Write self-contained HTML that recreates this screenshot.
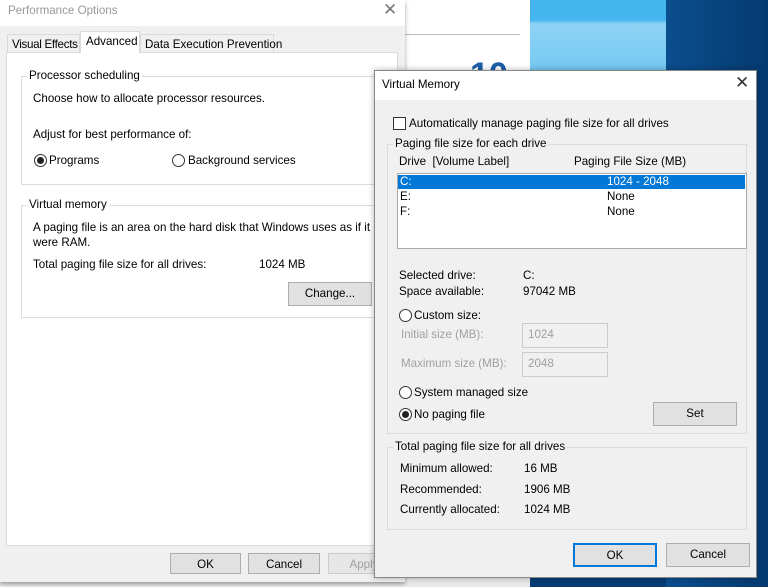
<!DOCTYPE html>
<html><head><style>
*{margin:0;padding:0;box-sizing:border-box}
body{width:768px;height:587px;position:relative;overflow:hidden;background:#063c73;font-family:"Liberation Sans",sans-serif;font-size:11.6px;color:#000}
.a{position:absolute;white-space:nowrap}
.btn{position:absolute;background:#e1e1e1;border:1px solid #adadad;text-align:center;line-height:21px}
.grp{position:absolute;border:1px solid #dcdcdc}
.lab{position:absolute;background:inherit;padding:0 2px}
.rad{position:absolute;width:13px;height:13px;border:1px solid #333;border-radius:50%;background:#fff}
.rad.on::after{content:"";position:absolute;left:2px;top:2px;width:7px;height:7px;border-radius:50%;background:#222}
.g{color:#a0a0a0}
</style></head><body>
<div class="a" style="left:0;top:560px;width:530px;height:27px;background:#e8e8e8"></div>
<div class="a" style="left:530px;top:0;width:136px;height:80px;background:linear-gradient(180deg,#45b5ee 0,#45b5ee 20px,#8ed3f5 24px,#6fc6f2 80px)"></div>
<div class="a" style="left:666px;top:0;width:102px;height:587px;background:linear-gradient(90deg,#0b4e8e,#053a70)"></div>
<div class="a" style="left:405px;top:0;width:125px;height:80px;background:#fff"></div>
<div class="a" style="left:405px;top:34px;width:115px;height:1px;background:#bbb"></div>
<div class="a" style="left:470px;top:56px;font-size:34px;color:#1e5fa8;font-weight:bold">10</div>

<div class="a" style="left:0;top:0;width:405px;height:582px;background:#f0f0f0;box-shadow:0 2px 4px rgba(0,0,0,.35)"></div>
<div class="a" style="left:0;top:0;width:405px;height:26px;background:#fff"></div>
<div class="a g" style="left:8px;top:4px;color:#999">Performance Options</div>
<div class="a" style="left:383px;top:0;font-size:17px;color:#777">✕</div>
<div class="a" style="left:6px;top:52px;width:392px;height:494px;background:#fff;border:1px solid #d9d9d9"></div>
<div class="a" style="left:7px;top:34px;width:73px;height:19px;border:1px solid #d9d9d9;background:#f0f0f0;padding:3px 0 0 4px;overflow:hidden;letter-spacing:-0.3px">Visual Effects</div>
<div class="a" style="left:80px;top:31px;width:60px;height:22px;border:1px solid #d9d9d9;border-bottom:none;background:#fff;padding:3px 0 0 5px">Advanced</div>
<div class="a" style="left:140px;top:34px;width:134px;height:19px;border:1px solid #d9d9d9;background:#f0f0f0;padding:3px 0 0 4px">Data Execution Prevention</div>
<div class="grp" style="left:21px;top:76px;width:390px;height:109px;background:#fff"><span class="lab" style="left:5px;top:-8px">Processor scheduling</span></div>
<div class="a" style="left:33px;top:92px">Choose how to allocate processor resources.</div>
<div class="a" style="left:33px;top:128px">Adjust for best performance of:</div>
<div class="rad on" style="left:34px;top:154px"></div><div class="a" style="left:49px;top:154px">Programs</div>
<div class="rad" style="left:172px;top:154px"></div><div class="a" style="left:188px;top:154px">Background services</div>
<div class="grp" style="left:21px;top:205px;width:390px;height:113px;background:#fff"><span class="lab" style="left:5px;top:-8px">Virtual memory</span></div>
<div class="a" style="left:33px;top:221px">A paging file is an area on the hard disk that Windows uses as if it</div>
<div class="a" style="left:33px;top:236px">were RAM.</div>
<div class="a" style="left:33px;top:258px">Total paging file size for all drives:</div>
<div class="a" style="left:259px;top:258px">1024 MB</div>
<div class="btn" style="left:288px;top:282px;width:84px;height:24px">Change...</div>
<div class="btn" style="left:170px;top:553px;width:71px;height:21px">OK</div>
<div class="btn" style="left:248px;top:553px;width:72px;height:21px">Cancel</div>
<div class="btn g" style="left:328px;top:553px;width:72px;height:21px;border-color:#ccc;background:#e6e6e6">Apply</div>

<div class="a" style="left:374px;top:70px;width:383px;height:508px;background:#f0f0f0;border:1px solid #888;box-shadow:0 0 6px rgba(0,0,0,.3)"></div>
<div class="a" style="left:375px;top:71px;width:381px;height:29px;background:#fff"></div>
<div class="a" style="left:382px;top:78px">Virtual Memory</div>
<div class="a" style="left:735px;top:73px;font-size:17px;color:#333">✕</div>
<div class="a" style="left:393px;top:117px;width:13px;height:13px;border:1px solid #333;background:#fff"></div>
<div class="a" style="left:409px;top:117px">Automatically manage paging file size for all drives</div>
<div class="grp" style="left:387px;top:144px;width:360px;height:290px"><span class="lab" style="left:5px;top:-8px;background:#f0f0f0">Paging file size for each drive</span></div>
<div class="a" style="left:399px;top:155px">Drive &nbsp;[Volume Label]</div>
<div class="a" style="left:574px;top:155px">Paging File Size (MB)</div>
<div class="a" style="left:397px;top:173px;width:350px;height:76px;background:#fff;border:1px solid #aaa"></div>
<div class="a" style="left:398px;top:175px;width:347px;height:14px;background:#0078d7"></div>
<div class="a" style="left:400px;top:175px;color:#fff">C:</div><div class="a" style="left:607px;top:175px;color:#fff">1024 - 2048</div>
<div class="a" style="left:400px;top:190px">E:</div><div class="a" style="left:607px;top:190px">None</div>
<div class="a" style="left:400px;top:205px">F:</div><div class="a" style="left:607px;top:205px">None</div>
<div class="a" style="left:399px;top:269px">Selected drive:</div><div class="a" style="left:523px;top:269px">C:</div>
<div class="a" style="left:399px;top:285px">Space available:</div><div class="a" style="left:523px;top:285px">97042 MB</div>
<div class="rad" style="left:399px;top:309px"></div><div class="a" style="left:414px;top:309px">Custom size:</div>
<div class="a g" style="left:401px;top:328px">Initial size (MB):</div>
<div class="a g" style="left:522px;top:323px;width:86px;height:25px;border:1px solid #ccc;padding:4px 0 0 5px">1024</div>
<div class="a g" style="left:401px;top:357px">Maximum size (MB):</div>
<div class="a g" style="left:522px;top:352px;width:86px;height:25px;border:1px solid #ccc;padding:4px 0 0 5px">2048</div>
<div class="rad" style="left:399px;top:386px"></div><div class="a" style="left:414px;top:386px">System managed size</div>
<div class="rad on" style="left:399px;top:408px"></div><div class="a" style="left:414px;top:408px">No paging file</div>
<div class="btn" style="left:653px;top:402px;width:84px;height:24px">Set</div>
<div class="grp" style="left:387px;top:447px;width:360px;height:83px"><span class="lab" style="left:5px;top:-8px;background:#f0f0f0">Total paging file size for all drives</span></div>
<div class="a" style="left:400px;top:462px">Minimum allowed:</div><div class="a" style="left:524px;top:462px">16 MB</div>
<div class="a" style="left:400px;top:483px">Recommended:</div><div class="a" style="left:524px;top:483px">1906 MB</div>
<div class="a" style="left:400px;top:503px">Currently allocated:</div><div class="a" style="left:524px;top:503px">1024 MB</div>
<div class="btn" style="left:573px;top:543px;width:84px;height:24px;border:2px solid #0078d7">OK</div>
<div class="btn" style="left:666px;top:543px;width:84px;height:24px">Cancel</div>
</body></html>
